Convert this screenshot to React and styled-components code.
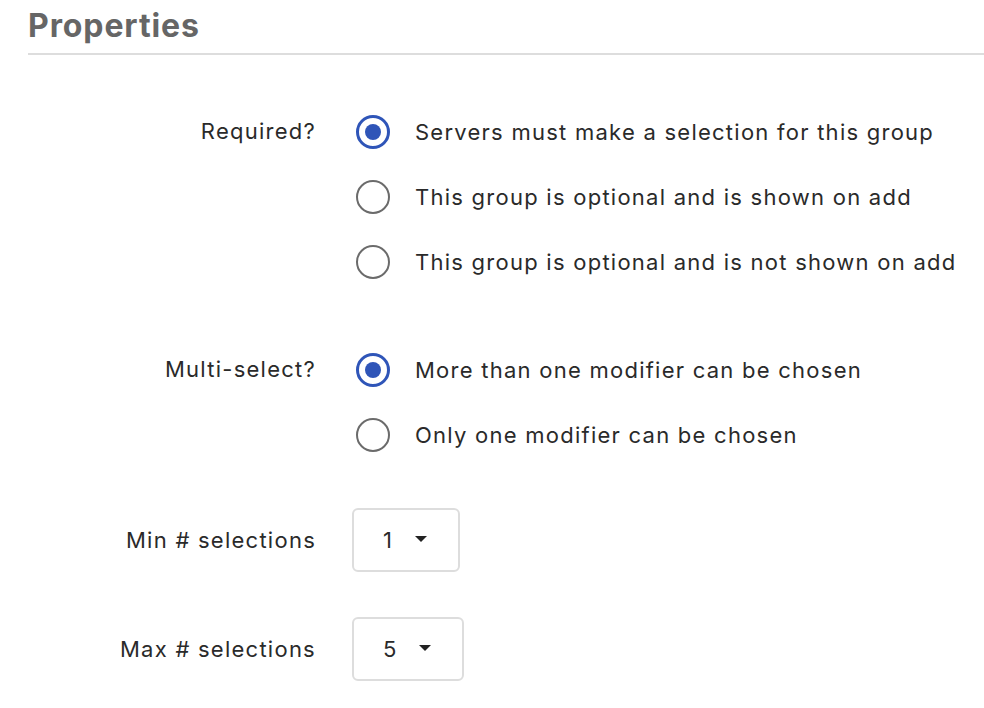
import styled, { createGlobalStyle } from "styled-components";

const GlobalStyle = createGlobalStyle`
  html, body {
    margin: 0;
    padding: 0;
    background: #ffffff;
  }
  body {
    font-family: Inter, "Noto Sans", sans-serif;
    color: #222222;
  }
`;

const Page = styled.div`
  padding: 0 0 0 28px;
  width: 956px;
`;

const Heading = styled.h2`
  margin: 0;
  padding-top: 6px;
  font-size: 32px;
  font-weight: 700;
  color: #666666;
  line-height: 40px;
  letter-spacing: 0.9px;
  padding-bottom: 7px;
  border-bottom: 2px solid #dddddd;
`;

const Form = styled.div`
  display: flex;
  flex-direction: column;
  gap: 43px;
  padding-top: 44px;
`;

const Section = styled.div`
  display: grid;
  grid-template-columns: 288px 1fr;
  column-gap: 36px;
  margin-top: ${(p) => p.$pull || 0}px;
`;

const Label = styled.div`
  text-align: right;
  font-size: 22px;
  letter-spacing: 1.25px;
  line-height: ${(p) => p.$h}px;
  height: ${(p) => p.$h}px;
  color: #2a2a2a;
`;

const Options = styled.div`
  display: flex;
  flex-direction: column;
`;

const Option = styled.label`
  display: flex;
  align-items: center;
  height: 65px;
  gap: 25px;
  font-size: 22px;
  letter-spacing: 1.25px;
  color: #2a2a2a;
  white-space: nowrap;
`;

const Radio = styled.span`
  flex: none;
  box-sizing: border-box;
  width: 34px;
  height: 34px;
  border-radius: 50%;
  border: ${(p) => (p.$on ? "3px solid #2f55b8" : "2px solid #6b6b6b")};
  display: flex;
  align-items: center;
  justify-content: center;
  margin-left: 4px;

  &::after {
    content: "";
    display: ${(p) => (p.$on ? "block" : "none")};
    width: 16px;
    height: 16px;
    border-radius: 50%;
    background: #2f55b8;
  }
`;

const Select = styled.div`
  box-sizing: border-box;
  height: 64px;
  width: ${(p) => p.$w}px;
  border: 2px solid #dddddd;
  border-radius: 6px;
  display: flex;
  align-items: center;
  padding-left: 29px;
  gap: 23px;
  font-size: 22px;
  color: #2a2a2a;
`;

const Caret = styled.span`
  width: 0;
  height: 0;
  border-left: 6px solid transparent;
  border-right: 6px solid transparent;
  border-top: 6px solid #222222;
  margin-top: -2px;
`;

function RadioGroup({ label, options, selected }) {
  return (
    <Section>
      <Label $h={65}>{label}</Label>
      <Options>
        {options.map((text, i) => (
          <Option key={text}>
            <Radio $on={i === selected} />
            {text}
          </Option>
        ))}
      </Options>
    </Section>
  );
}

function SelectRow({ label, value, width, pull }) {
  return (
    <Section $pull={pull}>
      <Label $h={64}>{label}</Label>
      <div>
        <Select $w={width}>
          {value}
          <Caret />
        </Select>
      </div>
    </Section>
  );
}

export default function App() {
  return (
    <Page>
      <GlobalStyle />
      <Heading>Properties</Heading>
      <Form>
        <RadioGroup
          label="Required?"
          selected={0}
          options={[
            "Servers must make a selection for this group",
            "This group is optional and is shown on add",
            "This group is optional and is not shown on add",
          ]}
        />
        <RadioGroup
          label="Multi-select?"
          selected={0}
          options={[
            "More than one modifier can be chosen",
            "Only one modifier can be chosen",
          ]}
        />
        <SelectRow label="Min # selections" value="1" width={108} pull={-2} />
        <SelectRow label="Max # selections" value="5" width={112} pull={2} />
      </Form>
    </Page>
  );
}
